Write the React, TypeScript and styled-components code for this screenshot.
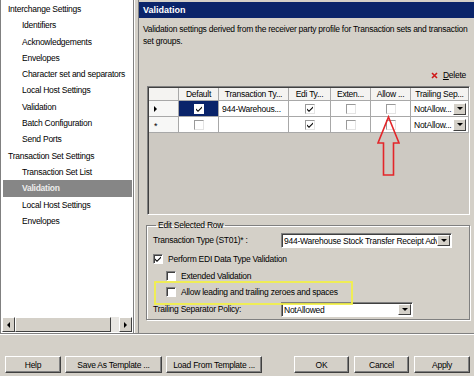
import React from 'react';
import styled, {createGlobalStyle} from 'styled-components';

const FACE = '#d4d0c8';
const SHADOW = '#808080';
const FONT = '"Liberation Sans", Arial, sans-serif';

const GlobalStyle = createGlobalStyle`
  html, body {
    margin: 0;
    padding: 0;
    background: ${FACE};
  }
  body {
    font-family: ${FONT};
    font-size: 8.5px;
    letter-spacing: -0.25px;
    color: #000;
  }
`;

type TreeItem = {label: string; level: number; selected?: boolean};

const treeItems: TreeItem[] = [
  {label: 'Interchange Settings', level: 0},
  {label: 'Identifiers', level: 1},
  {label: 'Acknowledgements', level: 1},
  {label: 'Envelopes', level: 1},
  {label: 'Character set and separators', level: 1},
  {label: 'Local Host Settings', level: 1},
  {label: 'Validation', level: 1},
  {label: 'Batch Configuration', level: 1},
  {label: 'Send Ports', level: 1},
  {label: 'Transaction Set Settings', level: 0},
  {label: 'Transaction Set List', level: 1},
  {label: 'Validation', level: 1, selected: true},
  {label: 'Local Host Settings', level: 1},
  {label: 'Envelopes', level: 1},
];

type Row = {
  marker: 'current' | 'new';
  isDefault: boolean;
  selected?: boolean;
  type: string;
  edi: boolean;
  extended: boolean;
  allow: boolean;
  trailing: string;
};

const rows: Row[] = [
  {marker: 'current', isDefault: true, selected: true, type: '944-Warehous...', edi: true, extended: false, allow: false, trailing: 'NotAllow...'},
  {marker: 'new', isDefault: false, type: '', edi: true, extended: false, allow: false, trailing: 'NotAllow...'},
];

const columns = ['', 'Default', 'Transaction Ty...', 'Edi Ty...', 'Exten...', 'Allow ...', 'Trailing Sep...'];
const COLS = '30px 40px 70px 42px 40px 40px 1fr';

const CheckMark = () => (
  <svg width="8" height="8" viewBox="0 0 8 8">
    <path d="M1 3.5 L3 5.5 L7 1.5 L7 3 L3 7 L1 5 Z" fill="#000" />
  </svg>
);

const App = () => {
  return (
    <>
      <GlobalStyle />
      <Window>
        <Main>
          <TreePanel>
            <TreeList>
              {treeItems.map((item, i) => (
                <TreeRow key={i} $level={item.level} $selected={item.selected}>
                  {item.label}
                </TreeRow>
              ))}
            </TreeList>
            <HScroll>
              <ScrollButton>
                <ArrowLeft />
              </ScrollButton>
              <ScrollThumb />
              <ScrollTrack />
              <ScrollButton>
                <ArrowRight />
              </ScrollButton>
            </HScroll>
          </TreePanel>
          <Splitter />
          <ContentPanel>
            <TitleBar>Validation</TitleBar>
            <Description>
              Validation settings derived from the receiver party profile for Transaction sets and transaction
              <br />
              set groups.
            </Description>
            <DeleteRow>
              <DeleteLink>
                <svg width="7" height="7" viewBox="0 0 7 7">
                  <path d="M1 1 L6 6 M6 1 L1 6" stroke="#d01818" strokeWidth="1.6" />
                </svg>
                <span>
                  <u>D</u>elete
                </span>
              </DeleteLink>
            </DeleteRow>
            <Grid>
              <GridRow>
                {columns.map((c, i) => (
                  <HeaderCell key={i}>{c}</HeaderCell>
                ))}
              </GridRow>
              {rows.map((r, i) => (
                <GridRow key={i}>
                  <RowHeader>{r.marker === 'current' ? <RowArrow /> : <NewMark>*</NewMark>}</RowHeader>
                  <Cell $center $selected={r.selected}>
                    <GridCheck $light={r.selected}>{r.isDefault && <CheckMark />}</GridCheck>
                  </Cell>
                  <Cell>{r.type}</Cell>
                  <Cell $center>
                    <GridCheck>{r.edi && <CheckMark />}</GridCheck>
                  </Cell>
                  <Cell $center>
                    <GridCheck>{r.extended && <CheckMark />}</GridCheck>
                  </Cell>
                  <Cell $center>
                    <GridCheck>{r.allow && <CheckMark />}</GridCheck>
                  </Cell>
                  <Cell>
                    <CellCombo>
                      <span>{r.trailing}</span>
                      <DropButton $small>
                        <DownTriangle />
                      </DropButton>
                    </CellCombo>
                  </Cell>
                </GridRow>
              ))}
            </Grid>
            <GroupBox>
              <Legend>Edit Selected Row</Legend>
              <FormRow>
                <FormLabel>Transaction Type (ST01)* :</FormLabel>
                <Combo $width={171}>
                  <ComboText>944-Warehouse Stock Transfer Receipt Advi</ComboText>
                  <DropButton>
                    <DownTriangle />
                  </DropButton>
                </Combo>
              </FormRow>
              <CheckRow $indent={0} $height={19}>
                <FormCheck>
                  <CheckMark />
                </FormCheck>
                Perform EDI Data Type Validation
              </CheckRow>
              <CheckRow $indent={13} $height={16}>
                <FormCheck />
                Extended Validation
              </CheckRow>
              <CheckRow $indent={13} $height={16}>
                <FormCheck />
                Allow leading and trailing zeroes and spaces
              </CheckRow>
              <FormRow>
                <FormLabel>Trailing Separator Policy:</FormLabel>
                <Combo $width={132}>
                  <ComboText>NotAllowed</ComboText>
                  <DropButton>
                    <DownTriangle />
                  </DropButton>
                </Combo>
              </FormRow>
            </GroupBox>
          </ContentPanel>
        </Main>
        <Separator />
        <ButtonBar>
          <ButtonGroup $gap={4}>
            <Button $width={56}>Help</Button>
            <Button $width={97}>Save As Template ...</Button>
            <Button $width={96}>Load From Template ...</Button>
          </ButtonGroup>
          <ButtonGroup $gap={5}>
            <Button $width={55}>OK</Button>
            <Button $width={55}>Cancel</Button>
            <Button $width={56}>Apply</Button>
          </ButtonGroup>
        </ButtonBar>

        <Annotation width="474" height="376" viewBox="0 0 474 376">
          <path
            d="M388.5 117 L399 143 L393.5 143 L393.5 175 L383.5 175 L383.5 143 L378 143 Z"
            fill="none"
            stroke="#e3262a"
            strokeWidth="1.6"
            strokeLinejoin="miter"
          />
          <rect x="155" y="282" width="197" height="22" fill="none" stroke="#f2f04a" strokeWidth="1.8" />
        </Annotation>
      </Window>
    </>
  );
};

export default App;

const Window = styled.div`
  position: relative;
  width: 474px;
  height: 376px;
  overflow: hidden;
  display: flex;
  flex-direction: column;
  background: ${FACE};
`;

const Main = styled.div`
  display: flex;
  height: 333px;
`;

const TreePanel = styled.div`
  width: 132px;
  flex-shrink: 0;
  background: #fff;
  border-left: 1px solid ${SHADOW};
  border-right: 1px solid ${SHADOW};
  display: flex;
  flex-direction: column;
`;

const TreeList = styled.div`
  flex: 1;
  padding: 1px 1px 0 2px;
`;

const TreeRow = styled.div<{$level: number; $selected?: boolean}>`
  height: 16.3px;
  line-height: 16.3px;
  padding-left: ${p => (p.$level === 0 ? 5 : 19)}px;
  white-space: nowrap;
  background: ${p => (p.$selected ? '#868686' : 'transparent')};
  color: ${p => (p.$selected ? '#ececec' : '#000')};
  font-weight: ${p => (p.$selected ? 'bold' : 'normal')};
`;

const HScroll = styled.div`
  height: 15px;
  margin: 0 1px 1px 1px;
  display: flex;
  background: #e8e6e2;
`;

const ScrollButton = styled.div`
  width: 13px;
  height: 15px;
  box-sizing: border-box;
  background: ${FACE};
  border: 1px solid;
  border-color: #fff #404040 #404040 #fff;
  display: flex;
  align-items: center;
  justify-content: center;
`;

const ScrollThumb = styled.div`
  width: 96px;
  box-sizing: border-box;
  background: ${FACE};
  border: 1px solid;
  border-color: #fff #404040 #404040 #fff;
`;

const ScrollTrack = styled.div`
  flex: 1;
`;

const ArrowLeft = styled.span`
  width: 0;
  height: 0;
  border-top: 3px solid transparent;
  border-bottom: 3px solid transparent;
  border-right: 3px solid #000;
`;

const ArrowRight = styled.span`
  width: 0;
  height: 0;
  border-top: 3px solid transparent;
  border-bottom: 3px solid transparent;
  border-left: 3px solid #000;
`;

const Splitter = styled.div`
  width: 3px;
  flex-shrink: 0;
  border-left: 1px solid #fff;
`;

const ContentPanel = styled.div`
  flex: 1;
  min-width: 0;
  border-left: 1px solid ${SHADOW};
  display: flex;
  flex-direction: column;
  padding-top: 2px;
`;

const TitleBar = styled.div`
  height: 16px;
  line-height: 16px;
  background: #0a246a;
  color: #fff;
  font-weight: bold;
  font-size: 9px;
  letter-spacing: 0;
  padding-left: 4px;
`;

const Description = styled.div`
  padding: 5px 4px 0 4px;
  line-height: 12px;
  white-space: nowrap;
  overflow: hidden;
`;

const DeleteRow = styled.div`
  display: flex;
  justify-content: flex-end;
  padding: 22px 8px 0 0;
  height: 12px;
`;

const DeleteLink = styled.div`
  display: flex;
  align-items: center;
  gap: 5px;
  line-height: 12px;
`;

const Grid = styled.div`
  margin: 5px 4px 0 8px;
  height: 129px;
  box-sizing: border-box;
  background: #cdc9c2;
  border: 1px solid;
  border-color: ${SHADOW} #fff #fff ${SHADOW};
  box-shadow: inset 1px 1px 0 #404040;
  padding: 1px 0 0 1px;
`;

const GridRow = styled.div`
  display: grid;
  grid-template-columns: ${COLS};
`;

const HeaderCell = styled.div`
  height: 12px;
  line-height: 12px;
  background: #f4f3f1;
  text-align: center;
  white-space: nowrap;
  overflow: hidden;
  border-right: 1px solid #a8a8a8;
  border-bottom: 1px solid #a8a8a8;
`;

const RowHeader = styled.div`
  height: 15px;
  background: #f7f7f6;
  border-right: 1px solid #a8a8a8;
  border-bottom: 1px solid #a8a8a8;
  display: flex;
  align-items: center;
  padding-left: 5px;
`;

const RowArrow = styled.span`
  width: 0;
  height: 0;
  border-top: 3px solid transparent;
  border-bottom: 3px solid transparent;
  border-left: 3px solid #000;
`;

const NewMark = styled.span`
  font-size: 9px;
  line-height: 9px;
  margin-top: 3px;
`;

const Cell = styled.div<{$center?: boolean; $selected?: boolean}>`
  height: 15px;
  background: ${p => (p.$selected ? '#0a246a' : '#fff')};
  border-right: 1px solid #a8a8a8;
  border-bottom: 1px solid #a8a8a8;
  display: flex;
  align-items: center;
  justify-content: ${p => (p.$center ? 'center' : 'flex-start')};
  padding-left: ${p => (p.$center ? 0 : 3)}px;
  white-space: nowrap;
  overflow: hidden;
`;

const GridCheck = styled.span<{$light?: boolean}>`
  width: 10px;
  height: 10px;
  box-sizing: border-box;
  background: #fff;
  border: 1px solid;
  border-color: ${p => (p.$light ? '#fff' : '#9a9a9a #e4e4e4 #e4e4e4 #9a9a9a')};
  display: flex;
  align-items: center;
  justify-content: center;
`;

const CellCombo = styled.div`
  flex: 1;
  display: flex;
  align-items: center;
  justify-content: space-between;
  padding-right: 2px;
`;

const DropButton = styled.div<{$small?: boolean}>`
  width: 13px;
  height: ${p => (p.$small ? 12 : 11)}px;
  flex-shrink: 0;
  box-sizing: border-box;
  background: ${FACE};
  border: 1px solid;
  border-color: #fff #404040 #404040 #fff;
  display: flex;
  align-items: center;
  justify-content: center;
`;

const DownTriangle = styled.span`
  width: 0;
  height: 0;
  border-left: 3px solid transparent;
  border-right: 3px solid transparent;
  border-top: 3px solid #000;
`;

const GroupBox = styled.fieldset`
  margin: 4px 4px 0 7px;
  padding: 0 0 0 6px;
  height: 99px;
  border: 1px solid ${SHADOW};
  box-shadow: 1px 1px 0 #fff, inset 1px 1px 0 #fff;
`;

const Legend = styled.legend`
  padding: 0 2px;
  margin-left: 3px;
  line-height: 12px;
`;

const FormRow = styled.div`
  display: grid;
  grid-template-columns: 128px auto;
  align-items: center;
  height: 18px;
`;

const FormLabel = styled.div`
  white-space: nowrap;
`;

const Combo = styled.div<{$width: number}>`
  width: ${p => p.$width}px;
  height: 15px;
  box-sizing: border-box;
  background: #fff;
  border: 1px solid;
  border-color: ${SHADOW} #fff #fff ${SHADOW};
  box-shadow: inset 1px 1px 0 #404040;
  display: flex;
  align-items: center;
  justify-content: space-between;
  padding: 1px 1px 0 2px;
`;

const ComboText = styled.span`
  white-space: nowrap;
  overflow: hidden;
`;

const CheckRow = styled.div<{$indent: number; $height: number}>`
  display: flex;
  align-items: center;
  gap: 5px;
  height: ${p => p.$height}px;
  padding-left: ${p => p.$indent}px;
  white-space: nowrap;
`;

const FormCheck = styled.span`
  width: 10px;
  height: 10px;
  box-sizing: border-box;
  background: #fff;
  border: 1px solid;
  border-color: ${SHADOW} #fff #fff ${SHADOW};
  box-shadow: inset 1px 1px 0 #404040;
  display: flex;
  align-items: center;
  justify-content: center;
`;

const Separator = styled.div`
  height: 1px;
  background: ${SHADOW};
  border-bottom: 1px solid #fff;
`;

const ButtonBar = styled.div`
  display: flex;
  justify-content: space-between;
  padding: 21px 4px 0 5px;
`;

const ButtonGroup = styled.div<{$gap: number}>`
  display: flex;
  gap: ${p => p.$gap}px;
`;

const Button = styled.div<{$width: number}>`
  width: ${p => p.$width}px;
  height: 17px;
  box-sizing: border-box;
  background: ${FACE};
  border: 1px solid;
  border-color: #fff #404040 #404040 #fff;
  box-shadow: inset -1px -1px 0 ${SHADOW};
  display: flex;
  align-items: center;
  justify-content: center;
  white-space: nowrap;
`;

const Annotation = styled.svg`
  position: absolute;
  left: 0;
  top: 0;
  pointer-events: none;
`;
